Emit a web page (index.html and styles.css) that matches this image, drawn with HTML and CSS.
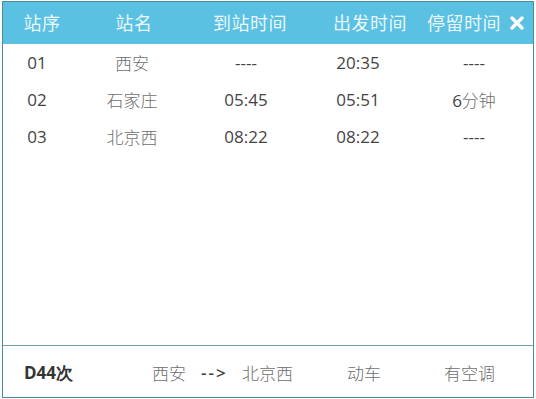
FILE: index.html
```html
<!DOCTYPE html>
<html lang="zh">
<head>
<meta charset="utf-8">
<title>D44次</title>
<link rel="stylesheet" href="styles.css">
</head>
<body>
<div class="popup">
  <div class="head">
    <div>站序</div>
    <div>站名</div>
    <div>到站时间</div>
    <div>出发时间</div>
    <div>停留时间</div>
    <span class="close"><svg width="14" height="14" viewBox="0 0 14 14"><path d="M2 2L12 12M12 2L2 12" stroke="#fff" stroke-width="3.4" stroke-linecap="round"/></svg></span>
  </div>
  <div class="body">
    <div class="row">
      <div class="num">01</div><div class="cn">西安</div><div class="num">----</div><div class="num">20:35</div><div class="num">----</div>
    </div>
    <div class="row">
      <div class="num">02</div><div class="cn">石家庄</div><div class="num">05:45</div><div class="num">05:51</div><div class="num"><span class="num">6</span><span class="cn">分钟</span></div>
    </div>
    <div class="row">
      <div class="num">03</div><div class="cn">北京西</div><div class="num">08:22</div><div class="num">08:22</div><div class="num">----</div>
    </div>
  </div>
  <div class="foot">
    <span class="train">D44次</span>
    <span class="cn from">西安</span>
    <span class="arrow">--&gt;</span>
    <span class="cn to">北京西</span>
    <span class="cn type">动车</span>
    <span class="cn ac">有空调</span>
  </div>
</div>
</body>
</html>
```

FILE: styles.css
```css
html, body {
  margin: 0;
  padding: 0;
  background: #fff;
}
.popup {
  position: relative;
  margin: 1px 2px 0 2px;
  width: 530px;
  height: 395px;
  border: 1px solid #4b8a9c;
  display: flex;
  flex-direction: column;
  background: #fff;
  font-family: "Noto Sans CJK SC", sans-serif;
}
.head {
  display: grid;
  grid-template-columns: 78px 106px 126px 114px 70px;
  text-align: center;
  height: 42px;
  background: #5bc1e2;
  color: #e9f6fb;
  font-size: 18px;
  line-height: 41px;
  letter-spacing: 0.5px;
  position: relative;
  white-space: nowrap;
}
.close {
  position: absolute;
  right: 9px;
  top: 14px;
  width: 14px;
  height: 14px;
  line-height: 0;
}
.body {
  flex: 1;
}
.row {
  display: grid;
  grid-template-columns: 68px 122px 106px 118px 114px;
  text-align: center;
  height: 37px;
  line-height: 37px;
}
.num {
  font-family: "Open Sans", "DejaVu Sans", sans-serif;
  font-size: 17px;
  color: #444;
}
.cn {
  font-family: "Noto Sans CJK SC", sans-serif;
  font-size: 17px;
  color: #6e6e6e;
  font-weight: 300;
}
.foot {
  height: 52px;
  border-top: 1px solid #6ea4b4;
  display: flex;
  align-items: center;
  padding-left: 21px;
  padding-top: 2px;
  box-sizing: border-box;
  white-space: nowrap;
}
.train {
  font-family: "Open Sans", "DejaVu Sans", sans-serif;
  font-weight: 700;
  font-size: 17px;
  color: #333;
  width: 128px;
}
.from { width: 49px; }
.arrow {
  font-family: "Open Sans", "DejaVu Sans", sans-serif;
  font-weight: 600;
  font-size: 17px;
  letter-spacing: 2px;
  color: #444;
  width: 41px;
}
.to { width: 105px; }
.type { width: 97px; }
```
